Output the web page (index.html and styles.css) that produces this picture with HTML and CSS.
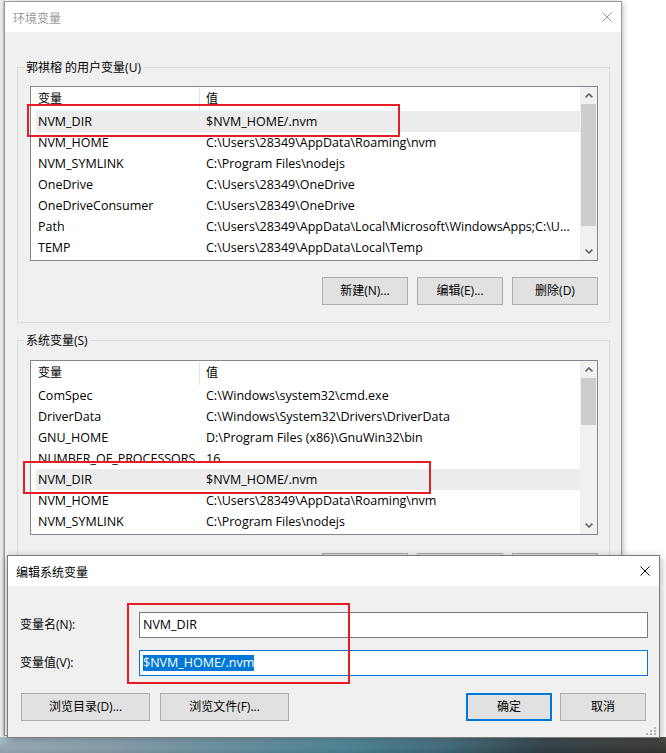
FILE: index.html
```html
<!DOCTYPE html>
<html lang="zh-CN">
<head>
<meta charset="utf-8">
<title>环境变量</title>
<link rel="stylesheet" href="styles.css">
</head>
<body>
<div class="bg-left"></div>

<div class="win win-main">
  <div class="titlebar inactive">
    <span class="title">环境变量</span>
    <svg class="close" width="10" height="10" viewBox="0 0 10 10"><path d="M0.5 0.5L9.5 9.5M9.5 0.5L0.5 9.5"/></svg>
  </div>
  <div class="main-body">
    <div class="group">
      <span class="group-label">郭祺榕 的用户变量(U)</span>
      <div class="listbox">
        <div class="list-main">
          <div class="list-head"><span class="h1"><span>变量</span></span><span class="h2">值</span></div>
          <div class="list-row sel"><span class="n">NVM_DIR</span><span class="v">$NVM_HOME/.nvm</span></div>
          <div class="list-row"><span class="n">NVM_HOME</span><span class="v">C:\Users\28349\AppData\Roaming\nvm</span></div>
          <div class="list-row"><span class="n">NVM_SYMLINK</span><span class="v">C:\Program Files\nodejs</span></div>
          <div class="list-row"><span class="n">OneDrive</span><span class="v">C:\Users\28349\OneDrive</span></div>
          <div class="list-row"><span class="n">OneDriveConsumer</span><span class="v">C:\Users\28349\OneDrive</span></div>
          <div class="list-row"><span class="n">Path</span><span class="v">C:\Users\28349\AppData\Local\Microsoft\WindowsApps;C:\U...</span></div>
          <div class="list-row"><span class="n">TEMP</span><span class="v">C:\Users\28349\AppData\Local\Temp</span></div>
        </div>
        <div class="vscroll">
          <div class="sb-btn"><svg width="8" height="5" viewBox="0 0 8 5"><path d="M0.6 4.4L4 1L7.4 4.4"/></svg></div>
          <div class="thumb thumb-user"></div>
          <div class="sb-space"></div>
          <div class="sb-btn"><svg width="8" height="5" viewBox="0 0 8 5"><path d="M0.6 0.6L4 4L7.4 0.6"/></svg></div>
        </div>
      </div>
      <div class="btn-row">
        <div class="btn">新建(N)...</div>
        <div class="btn">编辑(E)...</div>
        <div class="btn">删除(D)</div>
      </div>
    </div>

    <div class="group group-sys">
      <span class="group-label">系统变量(S)</span>
      <div class="listbox">
        <div class="list-main">
          <div class="list-head"><span class="h1"><span>变量</span></span><span class="h2">值</span></div>
          <div class="list-row"><span class="n">ComSpec</span><span class="v">C:\Windows\system32\cmd.exe</span></div>
          <div class="list-row"><span class="n">DriverData</span><span class="v">C:\Windows\System32\Drivers\DriverData</span></div>
          <div class="list-row"><span class="n">GNU_HOME</span><span class="v">D:\Program Files (x86)\GnuWin32\bin</span></div>
          <div class="list-row"><span class="n">NUMBER_OF_PROCESSORS</span><span class="v">16</span></div>
          <div class="list-row sel"><span class="n">NVM_DIR</span><span class="v">$NVM_HOME/.nvm</span></div>
          <div class="list-row"><span class="n">NVM_HOME</span><span class="v">C:\Users\28349\AppData\Roaming\nvm</span></div>
          <div class="list-row"><span class="n">NVM_SYMLINK</span><span class="v">C:\Program Files\nodejs</span></div>
        </div>
        <div class="vscroll">
          <div class="sb-btn"><svg width="8" height="5" viewBox="0 0 8 5"><path d="M0.6 4.4L4 1L7.4 4.4"/></svg></div>
          <div class="thumb thumb-sys"></div>
          <div class="sb-space"></div>
          <div class="sb-btn"><svg width="8" height="5" viewBox="0 0 8 5"><path d="M0.6 0.6L4 4L7.4 0.6"/></svg></div>
        </div>
      </div>
      <div class="btn-row btn-row-low">
        <div class="btn">新建(W)...</div>
        <div class="btn">编辑(I)...</div>
        <div class="btn">删除(L)</div>
      </div>
    </div>
  </div>
</div>

<div class="win win-edit">
  <div class="titlebar">
    <span class="title">编辑系统变量</span>
    <svg class="close close-active" width="10" height="10" viewBox="0 0 10 10"><path d="M0.5 0.5L9.5 9.5M9.5 0.5L0.5 9.5"/></svg>
  </div>
  <div class="edit-body">
    <div class="field">
      <span class="field-label">变量名(N):</span>
      <div class="field-input">NVM_DIR</div>
    </div>
    <div class="field">
      <span class="field-label">变量值(V):</span>
      <div class="field-input focus"><span class="selection">$NVM_HOME/.nvm</span></div>
    </div>
    <div class="edit-buttons">
      <div class="btn-group">
        <div class="btn btn-wide">浏览目录(D)...</div>
        <div class="btn btn-wide">浏览文件(F)...</div>
      </div>
      <div class="btn-group btn-group-right">
        <div class="btn btn-default">确定</div>
        <div class="btn">取消</div>
      </div>
    </div>
  </div>
  <svg class="grip" width="11" height="9" viewBox="0 0 11 9">
    <rect x="8" y="0" width="2" height="2"/>
    <rect x="4" y="3" width="2" height="2"/><rect x="8" y="3" width="2" height="2"/>
    <rect x="0" y="6" width="2" height="2"/><rect x="4" y="6" width="2" height="2"/><rect x="8" y="6" width="2" height="2"/>
  </svg>
</div>

<div class="desktop"></div>

<div class="mark mark-1"></div>
<div class="mark mark-2"></div>
<div class="mark mark-3"></div>
</body>
</html>
```

FILE: styles.css
```css
* { box-sizing: border-box; }
html, body { margin: 0; padding: 0; }
body {
  width: 666px;
  height: 753px;
  overflow: hidden;
  position: relative;
  background: #ffffff;
  font-family: "Open Sans", "Noto Sans CJK SC", sans-serif;
  font-size: 12px;
  color: #000;
}

.bg-left {
  position: absolute;
  left: 0; top: 0;
  width: 4px; height: 737px;
  background: #efefef;
  border-right: 1px solid #d0d0d0;
}

.desktop {
  position: absolute;
  left: 0; top: 737px;
  width: 666px; height: 16px;
  background:
    linear-gradient(180deg, rgba(255,255,255,0.12), rgba(0,0,0,0.12)),
    linear-gradient(90deg, #9fb4c2 0%, #8aa4b4 18%, #6796a6 36%, #4d889a 52%, #3f6f80 66%, #2f3f46 82%, #373631 100%);
}

/* windows */
.win {
  position: absolute;
  background: #f0f0f0;
  border: 1px solid #9a9a9a;
  display: flex;
  flex-direction: column;
}
.win-main {
  left: 4px; top: 1px;
  width: 618px; height: 735px;
  box-shadow: 1px 1px 6px rgba(0,0,0,0.28);
}
.win-edit {
  left: 7px; top: 555px;
  width: 653px; height: 183px;
  border-color: #7d7d7d;
  box-shadow: 1px 2px 8px rgba(0,0,0,0.3);
  z-index: 2;
}

.titlebar {
  flex: none;
  height: 30px;
  background: #fff;
  display: flex;
  align-items: center;
  justify-content: space-between;
  padding: 0 9px 0 8px;
}
.title {
  font-family: "Noto Sans CJK SC", sans-serif;
  font-size: 12px;
  line-height: 16px;
  padding-top: 2px;
}
.inactive .title { color: #999; }
.close path { stroke: #999; stroke-width: 1; fill: none; }
.close-active path { stroke: #000; }

/* main body */
.main-body {
  padding: 35px 11px 0 12px;
  display: flex;
  flex-direction: column;
  gap: 17px;
}
.group {
  position: relative;
  border: 1px solid #dcdcdc;
  padding: 18px 11px 17px 12px;
}
.group-sys { padding-top: 19px; }
.group-label {
  position: absolute;
  left: 6px; top: -8px;
  padding: 0 2px;
  line-height: 16px;
  background: #f0f0f0;
}

.listbox {
  height: 175px;
  border: 1px solid #828790;
  background: #fff;
  display: flex;
}
.list-main {
  flex: 1;
  min-width: 0;
  overflow: hidden;
}
.list-head {
  display: grid;
  grid-template-columns: 169px 1fr;
  height: 24px;
}
.list-head .h1 {
  display: flex;
  align-items: center;
  padding: 0 0 2px 7px;
  border-right: 1px solid #e5e5e5;
}
.list-head .h2 {
  display: flex;
  align-items: center;
  padding: 0 0 2px 6px;
}
.list-row {
  display: grid;
  grid-template-columns: 170px minmax(0, 1fr);
  align-items: center;
  height: 21px;
  margin-left: 5px;
  padding-right: 3px;
  font-size: 12.5px;
  line-height: 17px;
  white-space: nowrap;
}
.list-row .n { padding-left: 2px; overflow: hidden; }
.list-row .v { overflow: hidden; }
.list-row.sel { background: #ececec; }

.vscroll {
  flex: none;
  width: 17px;
  background: #f0f0f0;
  display: flex;
  flex-direction: column;
}
.sb-btn {
  flex: none;
  height: 17px;
  display: flex;
  align-items: center;
  justify-content: center;
}
.sb-btn path { stroke: #606060; stroke-width: 1.5; fill: none; }
.thumb { flex: none; margin: 0 1px; background: #cdcdcd; }
.thumb-user { height: 122px; }
.thumb-sys { height: 47px; }
.sb-space { flex: 1; }

.btn-row {
  display: flex;
  justify-content: flex-end;
  gap: 9px;
  margin-top: 16px;
}
.btn-row-low { margin-top: 18px; }
.btn {
  width: 86px;
  height: 28px;
  border: 1px solid #adadad;
  background: #e1e1e1;
  display: flex;
  align-items: center;
  justify-content: center;
  line-height: 16px;
  white-space: nowrap;
}
.btn-wide { width: 129px; }
.btn-default { border: 2px solid #0078d7; }

/* edit dialog */
.edit-body {
  flex: 1;
  padding: 26px 11px 15px 12px;
  display: flex;
  flex-direction: column;
}
.field { display: flex; align-items: center; }
.field + .field { margin-top: 12px; }
.field-label { flex: none; width: 119px; line-height: 16px; }
.field-input {
  width: 509px;
  height: 26px;
  border: 1px solid #7a7a7a;
  background: #fff;
  padding: 0 3px;
  display: flex;
  align-items: center;
  font-size: 12.5px;
  line-height: 16px;
  white-space: nowrap;
}
.field-input.focus { border-color: #0078d7; }
.selection { background: #0078d7; color: #fff; line-height: 16px; }

.edit-buttons {
  display: flex;
  justify-content: space-between;
  margin-top: 17px;
}
.btn-group { display: flex; gap: 10px; margin-left: 1px; }
.btn-group-right { gap: 8px; margin-left: 0; margin-right: 2px; }

.grip {
  position: absolute;
  right: 2px; bottom: 1px;
}
.grip rect { fill: #b4b4b4; }

/* annotation rectangles */
.mark {
  position: absolute;
  border: 2px solid #e81c24;
  z-index: 10;
}
.mark-1 { left: 27px; top: 104px; width: 373px; height: 33px; }
.mark-2 { left: 23px; top: 461px; width: 408px; height: 33px; }
.mark-3 { left: 127px; top: 603px; width: 223px; height: 81px; }
```
